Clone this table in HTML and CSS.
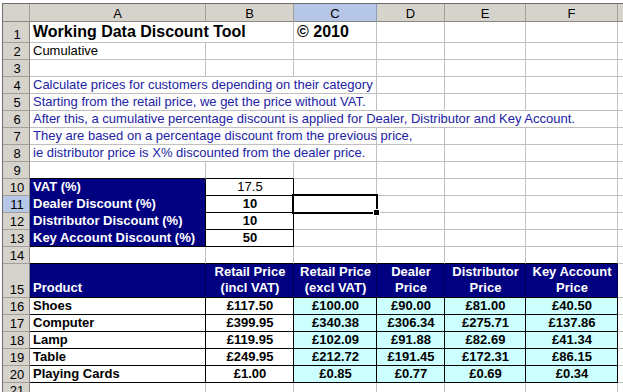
FILE: index.html
```html
<!DOCTYPE html>
<html>
<head>
<meta charset="utf-8">
<link rel="stylesheet" href="styles.css">
</head>
<body>
<div class="sheet">
  <!-- column headers -->
  <div class="ch corner"></div>
  <div class="ch">A</div>
  <div class="ch">B</div>
  <div class="ch on">C</div>
  <div class="ch">D</div>
  <div class="ch">E</div>
  <div class="ch">F</div>
  <div class="ch"></div>

  <!-- 1 -->
  <div class="rn">1</div>
  <div class="c title s2">Working Data Discount Tool</div>
  <div class="c title">© 2010</div>
  <div class="c"></div><div class="c"></div><div class="c"></div><div class="c"></div>

  <!-- 2 -->
  <div class="rn">2</div>
  <div class="c">Cumulative</div>
  <div class="c"></div><div class="c"></div><div class="c"></div><div class="c"></div><div class="c"></div><div class="c"></div>

  <!-- 3 -->
  <div class="rn">3</div>
  <div class="c"></div><div class="c"></div><div class="c"></div><div class="c"></div><div class="c"></div><div class="c"></div><div class="c"></div>

  <!-- 4 -->
  <div class="rn">4</div>
  <div class="c note s3">Calculate prices for customers depending on their category</div>
  <div class="c"></div><div class="c"></div><div class="c"></div><div class="c"></div>

  <!-- 5 -->
  <div class="rn">5</div>
  <div class="c note s3">Starting from the retail price, we get the price without VAT.</div>
  <div class="c"></div><div class="c"></div><div class="c"></div><div class="c"></div>

  <!-- 6 -->
  <div class="rn">6</div>
  <div class="c note s6">After this, a cumulative percentage discount is applied for Dealer, Distributor and Key Account.</div>
  <div class="c"></div>

  <!-- 7 -->
  <div class="rn">7</div>
  <div class="c note s3">They are based on a percentage discount from the previous price,</div>
  <div class="c"></div><div class="c"></div><div class="c"></div><div class="c"></div>

  <!-- 8 -->
  <div class="rn">8</div>
  <div class="c note s3">ie distributor price is X% discounted from the dealer price.</div>
  <div class="c"></div><div class="c"></div><div class="c"></div><div class="c"></div>

  <!-- 9 -->
  <div class="rn">9</div>
  <div class="c bb"></div><div class="c bb"></div>
  <div class="c"></div><div class="c"></div><div class="c"></div><div class="c"></div><div class="c"></div>

  <!-- 10 -->
  <div class="rn">10</div>
  <div class="c lab">VAT (%)</div>
  <div class="c val plain">17.5</div>
  <div class="c"></div><div class="c"></div><div class="c"></div><div class="c"></div><div class="c"></div>

  <!-- 11 -->
  <div class="rn on">11</div>
  <div class="c lab">Dealer Discount (%)</div>
  <div class="c val">10</div>
  <div class="c active"></div><div class="c"></div><div class="c"></div><div class="c"></div><div class="c"></div>

  <!-- 12 -->
  <div class="rn">12</div>
  <div class="c lab">Distributor Discount (%)</div>
  <div class="c val">10</div>
  <div class="c"></div><div class="c"></div><div class="c"></div><div class="c"></div><div class="c"></div>

  <!-- 13 -->
  <div class="rn">13</div>
  <div class="c lab lastlab">Key Account Discount (%)</div>
  <div class="c val">50</div>
  <div class="c"></div><div class="c"></div><div class="c"></div><div class="c"></div><div class="c"></div>

  <!-- 14 -->
  <div class="rn">14</div>
  <div class="c bb"></div><div class="c bb"></div><div class="c bb"></div><div class="c bb"></div><div class="c bb"></div><div class="c bb"></div>
  <div class="c"></div>

  <!-- 15 -->
  <div class="rn">15</div>
  <div class="c th left">Product</div>
  <div class="c th">Retail Price<br>(incl VAT)</div>
  <div class="c th">Retail Price<br>(excl VAT)</div>
  <div class="c th">Dealer<br>Price</div>
  <div class="c th">Distributor<br>Price</div>
  <div class="c th">Key Account<br>Price</div>
  <div class="c"></div>

  <!-- 16 -->
  <div class="rn">16</div>
  <div class="c td left">Shoes</div>
  <div class="c td">£117.50</div>
  <div class="c td cy">£100.00</div>
  <div class="c td cy">£90.00</div>
  <div class="c td cy">£81.00</div>
  <div class="c td cy">£40.50</div>
  <div class="c"></div>

  <!-- 17 -->
  <div class="rn">17</div>
  <div class="c td left">Computer</div>
  <div class="c td">£399.95</div>
  <div class="c td cy">£340.38</div>
  <div class="c td cy">£306.34</div>
  <div class="c td cy">£275.71</div>
  <div class="c td cy">£137.86</div>
  <div class="c"></div>

  <!-- 18 -->
  <div class="rn">18</div>
  <div class="c td left">Lamp</div>
  <div class="c td">£119.95</div>
  <div class="c td cy">£102.09</div>
  <div class="c td cy">£91.88</div>
  <div class="c td cy">£82.69</div>
  <div class="c td cy">£41.34</div>
  <div class="c"></div>

  <!-- 19 -->
  <div class="rn">19</div>
  <div class="c td left">Table</div>
  <div class="c td">£249.95</div>
  <div class="c td cy">£212.72</div>
  <div class="c td cy">£191.45</div>
  <div class="c td cy">£172.31</div>
  <div class="c td cy">£86.15</div>
  <div class="c"></div>

  <!-- 20 -->
  <div class="rn">20</div>
  <div class="c td left">Playing Cards</div>
  <div class="c td">£1.00</div>
  <div class="c td cy">£0.85</div>
  <div class="c td cy">£0.77</div>
  <div class="c td cy">£0.69</div>
  <div class="c td cy">£0.34</div>
  <div class="c"></div>

  <!-- 21 -->
  <div class="rn">21</div>
  <div class="c"></div><div class="c"></div><div class="c"></div><div class="c"></div><div class="c"></div><div class="c"></div><div class="c"></div>
</div>
</body>
</html>
```

FILE: styles.css
```css
html, body {
  margin: 0;
  padding: 0;
  background: #ffffff;
  overflow: hidden;
}

body {
  width: 623px;
  height: 392px;
  font-family: "Liberation Sans", Arial, sans-serif;
  font-size: 13px;
  color: #000;
}

.sheet {
  margin: 3px 0 0 2px;
  height: 389px;
  box-sizing: border-box;
  border-top: 1px solid #6e6e6e;
  border-left: 1px solid #6e6e6e;
  display: grid;
  grid-template-columns: 27px 176px 88px 83px 68px 81px 92px 1fr;
  grid-template-rows: 18px 21px repeat(13, 17px) 34px repeat(5, 17px) 1fr;
  overflow: hidden;
}

.sheet > div {
  box-sizing: border-box;
  min-width: 0;
}

/* column headers */
.ch {
  background: #d6d3cc;
  border-right: 1px solid #a29f98;
  border-bottom: 1px solid #8a8780;
  display: flex;
  align-items: center;
  justify-content: center;
  line-height: 15px;
  padding-top: 1px;
}

.ch.on {
  background: #b5c6e6;
  border-right-color: #8c9cbd;
}

/* row numbers */
.rn {
  background: #d6d3cc;
  border-right: 1px solid #8a8780;
  border-bottom: 1px solid #a29f98;
  display: flex;
  align-items: flex-end;
  justify-content: center;
  line-height: 15px;
  padding-bottom: 0;
  padding-left: 2px;
}

.rn.on {
  background: #b5c6e6;
}

/* cells */
.c {
  border-right: 1px solid #c0c0c0;
  border-bottom: 1px solid #c0c0c0;
  display: flex;
  align-items: flex-end;
  padding: 0 2px 1px 3px;
  line-height: 15px;
  white-space: nowrap;
  overflow: visible;
}

.s2 { grid-column: span 2; }
.s3 { grid-column: span 3; }
.s6 { grid-column: span 6; }

.title {
  font-size: 16px;
  font-weight: bold;
  line-height: 18px;
  padding-bottom: 1px;
}

.note {
  color: #2222a4;
}

.bb {
  border-bottom-color: #000;
}

.lab {
  background: #000080;
  color: #fff;
  font-weight: bold;
  border-right-color: #000;
  border-bottom-color: #000080;
}

.lab.lastlab {
  border-bottom-color: #000;
}

.val {
  justify-content: center;
  font-weight: bold;
  border-right-color: #000;
  border-bottom-color: #000;
}

.val.plain {
  font-weight: normal;
}

.active {
  position: relative;
}

.active::after {
  content: "";
  position: absolute;
  left: -2px;
  top: -2px;
  right: -2px;
  bottom: -2px;
  border: 2px solid #000;
  pointer-events: none;
}

.active::before {
  content: "";
  position: absolute;
  right: -4px;
  bottom: -4px;
  width: 5px;
  height: 5px;
  background: #000;
  border: 1px solid #fff;
  z-index: 2;
}

/* product table */
.th {
  background: #000080;
  color: #fff;
  font-weight: bold;
  border-right-color: #000050;
  border-bottom-color: #000;
  justify-content: center;
  text-align: center;
  line-height: 16px;
  padding-bottom: 1px;
}

.td {
  font-weight: bold;
  justify-content: center;
  border-right-color: #000;
  border-bottom-color: #000;
}

.left {
  justify-content: flex-start;
  text-align: left;
}

.cy {
  background: #ccffff;
}
```
